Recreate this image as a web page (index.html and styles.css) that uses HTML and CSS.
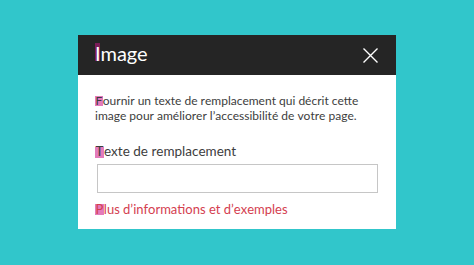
FILE: index.html
```html
<!DOCTYPE html>
<html lang="fr">
<head>
<meta charset="utf-8">
<title>Image</title>
<link rel="stylesheet" href="styles.css">
</head>
<body>
<div class="dialog">
  <div class="header">
    <h1 class="title"><span class="mark mark-dark">I</span>mage</h1>
    <svg class="close" width="15" height="15" viewBox="0 0 15 15" aria-label="Fermer">
      <path d="M0.5 0.5 L14.5 14.5 M14.5 0.5 L0.5 14.5" stroke="#ffffff" stroke-width="1.4" fill="none"/>
    </svg>
  </div>
  <div class="content">
    <p class="desc"><span class="mark">F</span>ournir un texte de remplacement qui décrit cette image pour améliorer l’accessibilité de votre page.</p>
    <label class="label"><span class="mark">T</span>exte de remplacement</label>
    <div class="input"></div>
    <a class="link"><span class="mark">P</span>lus d’informations et d’exemples</a>
  </div>
</div>
</body>
</html>
```
FILE: styles.css
```css
html, body {
  margin: 0;
  padding: 0;
}
body {
  background: #31c6cb;
  width: 474px;
  height: 265px;
  padding: 35px 0 0 78px;
  box-sizing: border-box;
  font-family: Lato, "Open Sans", sans-serif;
}
.dialog {
  width: 318px;
  background: #ffffff;
}
.header {
  height: 40px;
  background: #252525;
  display: flex;
  align-items: center;
  justify-content: space-between;
  padding: 0 18px 0 17px;
}
.title {
  margin: 0 0 4px 0;
  font-size: 20px;
  font-weight: 400;
  color: #ffffff;
  line-height: 24px;
}
.close {
  display: block;
}
.content {
  padding: 18px 18px 11px 17px;
  display: flex;
  flex-direction: column;
  align-items: flex-start;
}
.desc {
  margin: 0;
  font-size: 12px;
  line-height: 15px;
  color: #3d3d3d;
  font-kerning: none;
}
.label {
  margin-top: 20px;
  font-size: 13.5px;
  line-height: 17px;
  color: #3d3d3d;
  font-kerning: none;
}
.input {
  align-self: stretch;
  margin-top: 4px;
  margin-left: 2px;
  height: 29px;
  border: 1.5px solid #c6c6c6;
  box-sizing: border-box;
}
.link {
  margin-top: 8px;
  font-size: 13px;
  line-height: 17px;
  color: #d4404f;
  font-kerning: none;
}
.mark {
  padding: 0 0.5px;
  background-image: linear-gradient(rgba(222, 100, 175, 0.85), rgba(222, 100, 175, 0.85));
  background-repeat: no-repeat;
  background-size: 100% 0.85em;
  background-position: 0 0.26em;
}
.mark-dark {
  padding: 0;
  background-image: linear-gradient(#7b1d58, #7b1d58);
  background-size: 100% 0.9em;
  background-position: 0 0.1em;
}
```
